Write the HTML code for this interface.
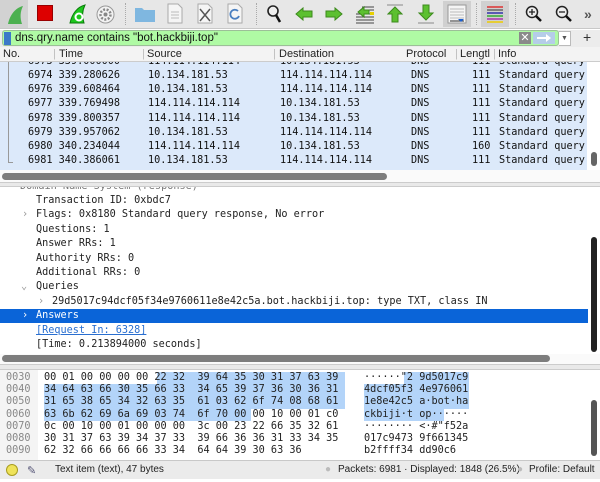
<!DOCTYPE html>
<html><head><meta charset="utf-8"><style>
*{margin:0;padding:0;box-sizing:border-box}
body{width:600px;height:479px;overflow:hidden;background:#fff;position:relative;font-family:"Liberation Sans",sans-serif;}
.a{position:absolute}
.mono{font-family:"DejaVu Sans Mono","Liberation Mono",monospace;font-size:10.2px;white-space:pre}
.tb{background:#e7e7e7;left:0;top:0;width:600px;height:29px;border-bottom:1px solid #c8c8c8}
.sep{position:absolute;top:3px;width:0;height:22px;border-left:1px dotted #aaa}
.row{position:absolute;left:0;width:587px;height:14.2px;background:#dce9fa;line-height:14px}
.row span{position:absolute}
.hd{position:absolute;top:0;font-size:11px;line-height:15px}
.dl{position:absolute;line-height:14px}
.hx{position:absolute;line-height:12.2px}
.sel{background:#b3d4f9}
</style></head><body>
<!-- toolbar -->
<div class="a tb">
 <div class="a" style="left:0;top:0;width:28px;height:28px;background:#d2d2d2"></div>
 <svg class="a" style="left:6px;top:5px" width="18" height="20"><path d="M2 19 C4 10 9 3 17 1 C14 7 14 13 16 19 Z" fill="#4cb050"/></svg>
 <div class="a" style="left:37px;top:5px;width:16px;height:16px;background:#dd0000;border:1px solid #900"></div>
 <svg class="a" style="left:68px;top:4px" width="18" height="20"><path d="M2 19 C4 10 9 3 17 1 C14 7 14 13 16 19 Z" fill="#1ec81e" stroke="#0a7a0a"/><circle cx="11" cy="13" r="3.5" fill="none" stroke="#fff" stroke-width="2"/></svg>
 <svg class="a" style="left:96px;top:5px" width="19" height="19"><circle cx="9.5" cy="9.5" r="8.5" fill="#f3f3f3" stroke="#999"/><circle cx="9.5" cy="9.5" r="5" fill="none" stroke="#888" stroke-width="2.5" stroke-dasharray="2 1.5"/><circle cx="9.5" cy="9.5" r="2" fill="#888"/></svg>
 <div class="sep" style="left:125px"></div>
 <svg class="a" style="left:135px;top:6px" width="20" height="16"><path d="M0 2h7l2 2h11v12H0z" fill="#7fb7e0"/></svg>
 <svg class="a" style="left:167px;top:3px" width="16" height="21"><path d="M1 1h10l4 4v15H1z" fill="#f5f5f5" stroke="#aaa"/><path d="M4 9h8M4 12h8M4 15h8" stroke="#bbb"/></svg>
 <svg class="a" style="left:197px;top:3px" width="16" height="21"><path d="M1 1h10l4 4v15H1z" fill="#f5f5f5" stroke="#aaa"/><path d="M3 6l10 12M13 6L3 18" stroke="#555" stroke-width="1.5"/></svg>
 <svg class="a" style="left:227px;top:3px" width="16" height="21"><path d="M1 1h10l4 4v15H1z" fill="#f5f5f5" stroke="#aaa"/><path d="M11 8a4.5 4.5 0 1 0 1 5" fill="none" stroke="#4a7fc0" stroke-width="1.8"/></svg>
 <div class="sep" style="left:256px"></div>
 <svg class="a" style="left:266px;top:4px" width="16" height="20"><circle cx="7" cy="7" r="5" fill="#eee" stroke="#222" stroke-width="1.6"/><path d="M10 11l4 7" stroke="#111" stroke-width="2.5"/></svg>
 <svg class="a" style="left:295px;top:7px" width="18" height="14"><path d="M1 7l7-6v3h9v6H8v3z" fill="#5cc030" stroke="#3c8a1c"/></svg>
 <svg class="a" style="left:325px;top:7px" width="18" height="14"><path d="M17 7l-7-6v3H1v6h9v3z" fill="#5cc030" stroke="#3c8a1c"/></svg>
 <svg class="a" style="left:355px;top:4px" width="20" height="20"><path d="M7 3h12M7 6h12M1 10h18M1 13h18M1 16h18M1 19h18" stroke="#444"/><path d="M3 8l6-5v3h5v4H9v3z" fill="#5cc030" stroke="#3c8a1c"/><rect x="15" y="8" width="4" height="3" fill="#e8d000"/></svg>
 <svg class="a" style="left:387px;top:4px" width="16" height="20"><path d="M0 1h16" stroke="#888"/><path d="M8 3l7 7h-4v8H5v-8H1z" fill="#5cc030" stroke="#3c8a1c"/></svg>
 <svg class="a" style="left:417px;top:4px" width="18" height="20"><path d="M1 19h16" stroke="#888"/><path d="M9 16l7-7h-4V1H6v8H2z" fill="#5cc030" stroke="#3c8a1c"/></svg>
 <div class="a" style="left:443px;top:1px;width:28px;height:26px;background:#d0d0d0"></div>
 <svg class="a" style="left:447px;top:4px" width="20" height="20"><rect x="1" y="1" width="18" height="18" fill="#f5f5f5" stroke="#999"/><path d="M3 5h14M3 8h14M3 11h14M3 14h14" stroke="#bbb"/><path d="M3 17h14" stroke="#333"/><path d="M11 15h6l-3 3z" fill="#1a5fd0"/></svg>
 <div class="sep" style="left:476px"></div>
 <div class="a" style="left:481px;top:1px;width:28px;height:26px;background:#d0d0d0"></div>
 <svg class="a" style="left:486px;top:5px" width="18" height="18"><path d="M1 2h16" stroke="#d33" stroke-width="1.5"/><path d="M1 5h16" stroke="#666" stroke-width="1.5"/><path d="M1 8h16" stroke="#33a" stroke-width="1.5"/><path d="M1 11h16" stroke="#3a3" stroke-width="1.5"/><path d="M1 14h16" stroke="#a3a" stroke-width="1.5"/><path d="M1 17h16" stroke="#ec0" stroke-width="1.5"/></svg>
 <div class="sep" style="left:515px"></div>
 <svg class="a" style="left:525px;top:5px" width="18" height="18"><circle cx="7" cy="7" r="5.5" fill="#eee" stroke="#222" stroke-width="1.5"/><path d="M4 7h6M7 4v6" stroke="#222" stroke-width="1.3"/><path d="M11 11l5 5" stroke="#111" stroke-width="2.5"/></svg>
 <svg class="a" style="left:555px;top:5px" width="18" height="18"><circle cx="7" cy="7" r="5.5" fill="#eee" stroke="#222" stroke-width="1.5"/><path d="M4 7h6" stroke="#222" stroke-width="1.3"/><path d="M11 11l5 5" stroke="#111" stroke-width="2.5"/></svg>
 <div class="a" style="left:584px;top:6px;font-size:14px;color:#555;font-weight:bold">»</div>
</div>
<!-- filter bar -->
<div class="a" style="left:0;top:30px;width:600px;height:17px;background:#ececec"></div>
<div class="a" style="left:2px;top:30px;width:557px;height:16px;background:#affaa4;border:1px solid #9cbf98;border-radius:3px"></div>
<div class="a" style="left:4px;top:32px;width:7px;height:13px;background:#3b78c8"></div>
<div class="a" style="left:15px;top:31px;font-size:11.5px;line-height:15px;color:#111">dns.qry.name contains "bot.hackbiji.top"</div>
<div class="a" style="left:519px;top:32px;width:12px;height:12px;background:#8a8a8a;color:#fff;font-size:11px;line-height:12px;text-align:center">✕</div>
<div class="a" style="left:533px;top:32px;width:22px;height:12px;background:#b5cde8"></div>
<svg class="a" style="left:536px;top:33px" width="16" height="10"><path d="M1 4h9V1l5 4-5 4V6H1z" fill="#fff"/></svg>
<div class="a" style="left:559px;top:31px;width:12px;height:15px;background:#fff;border:1px solid #bbb;border-left:none;font-size:7px;color:#555;line-height:14px;text-align:center">▼</div>
<div class="a" style="left:583px;top:29px;font-size:14px;color:#333">+</div>
<!-- header -->
<div class="a" style="left:0;top:47px;width:600px;height:15px;background:#f3f3f3;border-bottom:1px solid #ccc;color:#222">
 <span class="hd" style="left:3px">No.</span>
 <span class="hd" style="left:53px;color:#bbb">|</span><span class="hd" style="left:59px">Time</span>
 <span class="hd" style="left:142px;color:#bbb">|</span><span class="hd" style="left:147px">Source</span>
 <span class="hd" style="left:273px;color:#bbb">|</span><span class="hd" style="left:279px">Destination</span>
 <span class="hd" style="left:406px">Protocol</span>
 <span class="hd" style="left:455px;color:#bbb">|</span><span class="hd" style="left:460px">Lengtl</span>
 <span class="hd" style="left:493px;color:#bbb">|</span><span class="hd" style="left:498px">Info</span>
</div>
<!-- packet rows -->
<div class="a mono" style="left:0;top:62px;width:587px;height:108px;overflow:hidden;color:#111">
 <div class="a" style="left:0;top:0;width:587px;height:108px;background:#dce9fa"></div>
 <div class="row" style="top:-7px"><span style="left:28px">6973 339.000000</span><span style="left:148px">114.114.114.114</span><span style="left:280px">10.134.181.53</span><span style="left:411px">DNS</span><span style="left:472px">111</span><span style="left:499px">Standard query</span></div>
 <div class="row" style="top:7px"><span style="left:28px">6974 339.280626</span><span style="left:148px">10.134.181.53</span><span style="left:280px">114.114.114.114</span><span style="left:411px">DNS</span><span style="left:472px">111</span><span style="left:499px">Standard query</span></div>
 <div class="row" style="top:21.2px"><span style="left:28px">6976 339.608464</span><span style="left:148px">10.134.181.53</span><span style="left:280px">114.114.114.114</span><span style="left:411px">DNS</span><span style="left:472px">111</span><span style="left:499px">Standard query</span></div>
 <div class="row" style="top:35.4px"><span style="left:28px">6977 339.769498</span><span style="left:148px">114.114.114.114</span><span style="left:280px">10.134.181.53</span><span style="left:411px">DNS</span><span style="left:472px">111</span><span style="left:499px">Standard query</span></div>
 <div class="row" style="top:49.6px"><span style="left:28px">6978 339.800357</span><span style="left:148px">114.114.114.114</span><span style="left:280px">10.134.181.53</span><span style="left:411px">DNS</span><span style="left:472px">111</span><span style="left:499px">Standard query</span></div>
 <div class="row" style="top:63.8px"><span style="left:28px">6979 339.957062</span><span style="left:148px">10.134.181.53</span><span style="left:280px">114.114.114.114</span><span style="left:411px">DNS</span><span style="left:472px">111</span><span style="left:499px">Standard query</span></div>
 <div class="row" style="top:78px"><span style="left:28px">6980 340.234044</span><span style="left:148px">114.114.114.114</span><span style="left:280px">10.134.181.53</span><span style="left:411px">DNS</span><span style="left:472px">160</span><span style="left:499px">Standard query</span></div>
 <div class="row" style="top:92.2px"><span style="left:28px">6981 340.386061</span><span style="left:148px">10.134.181.53</span><span style="left:280px">114.114.114.114</span><span style="left:411px">DNS</span><span style="left:472px">111</span><span style="left:499px">Standard query</span></div>
 <div class="a" style="left:8px;top:0;width:5px;height:101px;border-left:1px solid #999;border-bottom:1px solid #999"></div>
</div>
<div class="a" style="left:591px;top:152px;width:6px;height:14px;background:#666;border-radius:3px"></div>
<!-- h scrollbar -->
<div class="a" style="left:0;top:170px;width:600px;height:12px;background:#fafafa"></div>
<div class="a" style="left:2px;top:173px;width:385px;height:7px;background:#7d7d7d;border-radius:4px"></div>
<div class="a" style="left:0;top:182px;width:600px;height:5px;background:#e9e9e9;border-top:1px solid #ccc;border-bottom:1px solid #ccc"></div>
<!-- details -->
<div class="a mono" style="left:0;top:187px;width:590px;height:167px;overflow:hidden;color:#222">
 <div class="dl" style="left:20px;top:-7px;color:#777">Domain Name System (response)</div>
 <div class="dl" style="left:36px;top:7px">Transaction ID: 0xbdc7</div>
 <div class="dl" style="left:22px;top:21px;color:#999">›</div><div class="dl" style="left:36px;top:21px">Flags: 0x8180 Standard query response, No error</div>
 <div class="dl" style="left:36px;top:36px">Questions: 1</div>
 <div class="dl" style="left:36px;top:50px">Answer RRs: 1</div>
 <div class="dl" style="left:36px;top:65px">Authority RRs: 0</div>
 <div class="dl" style="left:36px;top:79px">Additional RRs: 0</div>
 <div class="dl" style="left:21px;top:93px;color:#999">⌄</div><div class="dl" style="left:36px;top:93px">Queries</div>
 <div class="dl" style="left:38px;top:108px;color:#999">›</div><div class="dl" style="left:52px;top:108px">29d5017c94dcf05f34e9760611e8e42c5a.bot.hackbiji.top: type TXT, class IN</div>
 <div class="a" style="left:0;top:122px;width:588px;height:14px;background:#0a64d8"></div>
 <div class="dl" style="left:22px;top:122px;color:#fff">›</div><div class="dl" style="left:36px;top:122px;color:#fff">Answers</div>
 <div class="dl" style="left:36px;top:137px;color:#2a6fd0;text-decoration:underline">[Request In: 6328]</div>
 <div class="dl" style="left:36px;top:151px">[Time: 0.213894000 seconds]</div>
</div>
<div class="a" style="left:591px;top:237px;width:6px;height:115px;background:#222;border-radius:3px"></div>
<div class="a" style="left:0;top:354px;width:600px;height:10px;background:#fafafa"></div>
<div class="a" style="left:2px;top:355px;width:548px;height:7px;background:#7d7d7d;border-radius:4px"></div>
<div class="a" style="left:0;top:364px;width:600px;height:6px;background:#e9e9e9;border-top:1px solid #ccc;border-bottom:1px solid #ccc"></div>
<!-- hex -->
<div class="a" style="left:0;top:370px;width:38px;height:90px;background:#f4f4f4"></div>
<div class="a mono" style="left:0;top:372px;width:590px;height:88px;color:#222">
 <div class="a sel" style="left:157px;top:0;width:188px;height:12.2px"></div>
 <div class="a sel" style="left:44px;top:12.2px;width:301px;height:24.4px"></div>
 <div class="a sel" style="left:44px;top:36.6px;width:207px;height:12.2px"></div>
 <div class="a sel" style="left:404px;top:0;width:65px;height:12.2px"></div>
 <div class="a sel" style="left:364px;top:12.2px;width:105px;height:24.4px"></div>
 <div class="a sel" style="left:364px;top:36.6px;width:80px;height:12.2px"></div>
 <div class="hx" style="left:6px;top:0;color:#888">0030
0040
0050
0060
0070
0080
0090</div>
 <div class="hx" style="left:44px;top:0">00 01 00 00 00 00 22 32  39 64 35 30 31 37 63 39
34 64 63 66 30 35 66 33  34 65 39 37 36 30 36 31
31 65 38 65 34 32 63 35  61 03 62 6f 74 08 68 61
63 6b 62 69 6a 69 03 74  6f 70 00 00 10 00 01 c0
0c 00 10 00 01 00 00 00  3c 00 23 22 66 35 32 61
30 31 37 63 39 34 37 33  39 66 36 36 31 33 34 35
62 32 66 66 66 66 33 34  64 64 39 30 63 36</div>
 <div class="hx" style="left:364px;top:0">······"2 9d5017c9
4dcf05f3 4e976061
1e8e42c5 a·bot·ha
ckbiji·t op······
········ &lt;·#"f52a
017c9473 9f661345
b2ffff34 dd90c6</div>
</div>
<div class="a" style="left:591px;top:400px;width:6px;height:56px;background:#555;border-radius:3px"></div>
<!-- status -->
<div class="a" style="left:0;top:460px;width:600px;height:19px;background:#ebebeb;border-top:1px solid #c8c8c8;font-size:10px;line-height:18px;color:#222">
 <div class="a" style="left:6px;top:3px;width:12px;height:12px;border-radius:50%;background:#efe35a;border:1px solid #a89d20"></div>
 <div class="a" style="left:27px;top:1px;font-size:11px;color:#557">✎</div>
 <div class="a" style="left:55px;top:0">Text item (text), 47 bytes</div>
 <div class="a" style="left:325px;top:0;color:#bbb">●</div>
 <div class="a" style="left:338px;top:0">Packets: 6981 · Displayed: 1848 (26.5%)</div>
 <div class="a" style="left:517px;top:0;color:#bbb">●</div>
 <div class="a" style="left:529px;top:0">Profile: Default</div>
</div>
</body></html>
